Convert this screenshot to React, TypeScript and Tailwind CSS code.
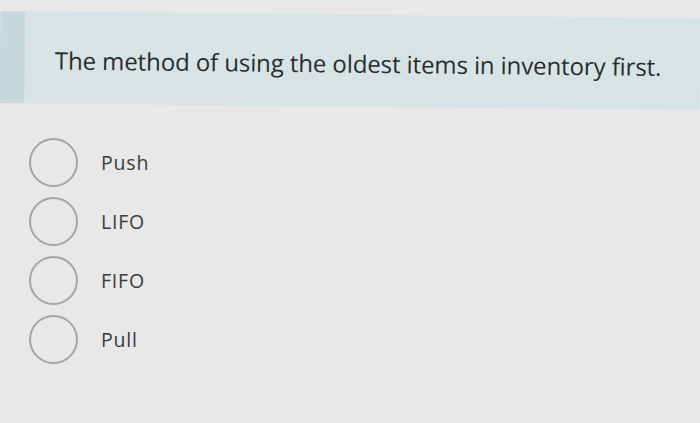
import React from "react";

const options = ["Push", "LIFO", "FIFO", "Pull"];

export default function App() {
  return (
    <div
      className="w-[700px] h-[423px] overflow-hidden bg-[#e7e8e7] pt-[11px]"
      style={{ fontFamily: '"Open Sans", "Noto Sans", sans-serif' }}
    >
      <div className="flex h-[92px] rotate-[0.6deg] origin-left">
        <div className="w-[25px] bg-[#c8d9db]" />
        <div className="flex-1 bg-[#d8e3e5] flex items-center pl-[30px] pt-[6px]">
          <span className="text-[24px] text-[#2a2c2d] tracking-[-0.1px]">
            The method of using the oldest items in inventory first.
          </span>
        </div>
      </div>
      <div className="flex flex-col gap-[10px] pl-[29px] pt-[35px]">
        {options.map((o) => (
          <div key={o} className="flex items-center gap-[23px]">
            <div className="w-[49px] h-[49px] rounded-full border-2 border-[#a4a6a6]" />
            <span className="text-[19.5px] tracking-[0.8px] text-[#3a3c3c]">
              {o}
            </span>
          </div>
        ))}
      </div>
    </div>
  );
}
